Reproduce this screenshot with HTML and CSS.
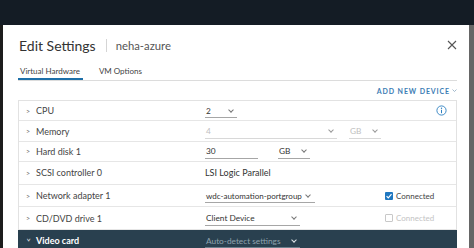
FILE: index.html
```html
<!DOCTYPE html>
<html lang="en">
<head>
  <meta charset="UTF-8" />
  <title>Edit Settings</title>
  <link rel="stylesheet" href="styles.css">
</head>
<body>
  <div class="topbar"></div>
  <div class="stage">
    <div class="edge-left"></div>
    <div class="modal">
      <div class="header">
        <span class="title">Edit Settings</span>
        <span class="divider"></span>
        <span class="subtitle">neha-azure</span>
        <svg class="close" width="10" height="10" viewBox="0 0 10 10"><path d="M1 1L9 9M9 1L1 9" stroke="#555" stroke-width="1.1" fill="none"/></svg>
      </div>

      <div class="tabs">
        <span class="tab active">Virtual Hardware</span>
        <span class="tab">VM Options</span>
      </div>

      <div class="toolbar">
        <span class="add-device">ADD NEW DEVICE</span>
        <svg width="5" height="3" viewBox="0 0 5 3"><path d="M0.5 0.5L2.5 2.5L4.5 0.5" stroke="#8aa7bf" stroke-width="0.8" fill="none"/></svg>
      </div>

      <div class="hw-table">
        <div class="row short">
          <div class="label"><span class="chev">&gt;</span>CPU</div>
          <div class="value">
            <span class="select w-cpu">2<i class="caret"></i></span>
          </div>
          <div class="extra end">
            <svg width="11" height="11" viewBox="0 0 11 11"><circle cx="5.5" cy="5.5" r="4.6" stroke="#2b7fc0" stroke-width="0.9" fill="none"/><circle cx="5.5" cy="3.2" r="0.7" fill="#2b7fc0"/><path d="M5.5 4.8V8.2" stroke="#2b7fc0" stroke-width="1"/></svg>
          </div>
        </div>
        <div class="row short">
          <div class="label"><span class="chev">&gt;</span>Memory</div>
          <div class="value wide">
            <span class="select w-mem disabled">4<i class="caret"></i></span>
            <span class="select w-unit disabled unit-mem">GB<i class="caret"></i></span>
          </div>
        </div>
        <div class="row short">
          <div class="label"><span class="chev">&gt;</span>Hard disk 1</div>
          <div class="value wide">
            <span class="select w-disk">30</span>
            <span class="select w-unit unit-disk">GB<i class="caret"></i></span>
          </div>
        </div>
        <div class="row tall">
          <div class="label"><span class="chev">&gt;</span>SCSI controller 0</div>
          <div class="value">LSI Logic Parallel</div>
        </div>
        <div class="row tall">
          <div class="label"><span class="chev">&gt;</span>Network adapter 1</div>
          <div class="value">
            <span class="select w-net">wdc-automation-portgroup<i class="caret"></i></span>
          </div>
          <div class="extra">
            <span class="check on"><svg width="8" height="8" viewBox="0 0 8 8"><path d="M1.6 4.1L3.3 5.8L6.5 2.2" stroke="#fff" stroke-width="1.2" fill="none"/></svg></span>
            <span class="check-label">Connected</span>
          </div>
        </div>
        <div class="row tall">
          <div class="label"><span class="chev">&gt;</span>CD/DVD drive 1</div>
          <div class="value">
            <span class="select w-cd">Client Device<i class="caret"></i></span>
          </div>
          <div class="extra">
            <span class="check off"></span>
            <span class="check-label muted">Connected</span>
          </div>
        </div>
        <div class="row open">
          <div class="label"><span class="chev down">&gt;</span>Video card</div>
          <div class="value">
            <span class="select w-cd dark">Auto-detect settings<i class="caret"></i></span>
          </div>
        </div>
      </div>
    </div>
    <div class="edge-right"></div>
  </div>
</body>
</html>
```

FILE: styles.css
```css
body {
  margin: 0;
  width: 474px;
  height: 248px;
  overflow: hidden;
  background: #3a3a3a;
  font-family: Lato, "Open Sans", sans-serif;
  color: #444;
}
.topbar {
  height: 25px;
  background: #141c25;
}
.stage {
  display: flex;
  height: 223px;
}
.edge-left {
  width: 3px;
  background: #1c1c1c;
}
.edge-right {
  width: 5px;
  background: #666;
}
.modal {
  flex: 1;
  background: #fff;
  padding: 0 12px 0 15px;
  overflow: hidden;
}
.header {
  display: flex;
  align-items: center;
  height: 40px;
  padding-left: 1px;
}
.title {
  font-size: 14px;
  color: #333;
}
.divider {
  width: 1px;
  height: 13px;
  background: #d5d5d5;
  margin: 0 9px 0 10px;
}
.subtitle {
  font-size: 11.3px;
  color: #555;
}
.close {
  margin-left: auto;
}
.tabs {
  display: flex;
  gap: 14px;
  height: 15px;
  border-bottom: 1px solid #dcdcdc;
}
.tab {
  font-size: 8px;
  color: #444;
  padding: 0 2px;
  line-height: 13px;
}
.tab.active {
  box-shadow: inset 0 -2px 0 #1d6fa8;
}
.tabs .tab:first-child {
  padding-right: 3px;
}
.toolbar {
  display: flex;
  justify-content: flex-end;
  align-items: center;
  gap: 2px;
  height: 19px;
}
.add-device {
  font-size: 7px;
  font-weight: bold;
  letter-spacing: 0.9px;
  color: #3c7db4;
}
.hw-table {
  border: 1px solid #e2e2e2;
  border-bottom: none;
}
.row {
  display: grid;
  grid-template-columns: 186px 180px 1fr;
  align-items: center;
  border-bottom: 1px solid #e6e6e6;
  font-size: 9px;
  box-sizing: border-box;
  white-space: nowrap;
}
.row.short {
  height: 20.4px;
}
.row.tall {
  height: 22.6px;
}
.row.open {
  height: 22px;
  background: #29404f;
  color: #fff;
  border-bottom: none;
  margin: 0 -1px;
  padding-left: 1px;
}
.label {
  display: flex;
  align-items: center;
  padding-left: 7px;
  color: #444;
}
.row.open .label {
  color: #fff;
  font-weight: bold;
}
.chev {
  width: 10px;
  font-size: 7px;
  color: #666;
}
.chev.down {
  display: inline-block;
  width: 6px;
  margin-right: 4px;
  transform: rotate(90deg);
  color: #ddd;
}
.value {
  display: flex;
  align-items: center;
  color: #333;
}
.value.wide {
  grid-column: 2 / 4;
}
.select {
  display: flex;
  align-items: center;
  justify-content: space-between;
  gap: 4px;
  height: 15px;
  box-sizing: border-box;
  padding: 1px 2px 0 1px;
  border-bottom: 1px solid #a6a6a6;
  color: #333;
  font-size: 8.3px;
}
.select.disabled {
  color: #c0c0c0;
  border-bottom-color: #d8d8d8;
}
.select.dark {
  color: #8fa2ae;
  border-bottom-color: #6b808d;
}
.caret {
  flex-shrink: 0;
  width: 3px;
  height: 3px;
  border-right: 1px solid #777;
  border-bottom: 1px solid #777;
  transform: rotate(45deg);
  margin: 0 2px 2px 0;
}
.select.disabled .caret {
  border-color: #999;
}
.select.dark .caret {
  border-color: #e0e6ea;
}
.w-cpu { width: 32px; }
.w-mem { width: 132px; }
.w-unit { width: 32px; }
.w-disk { width: 53px; }
.w-net { width: 110px; font-size: 8px; padding-right: 3px; }
.w-cd { width: 95px; }
.unit-mem { margin-left: 12px; }
.unit-disk { margin-left: 20px; }
.extra {
  display: flex;
  align-items: center;
  gap: 3px;
}
.extra.end {
  justify-content: flex-end;
  padding-right: 9px;
}
.check {
  width: 8px;
  height: 8px;
  box-sizing: border-box;
  border-radius: 1px;
  display: flex;
}
.check.on {
  background: #1f77c0;
}
.check.off {
  border: 1px solid #c8c8c8;
}
.check-label {
  font-size: 8px;
  color: #444;
}
.check-label.muted {
  color: #c4c4c4;
}
```
